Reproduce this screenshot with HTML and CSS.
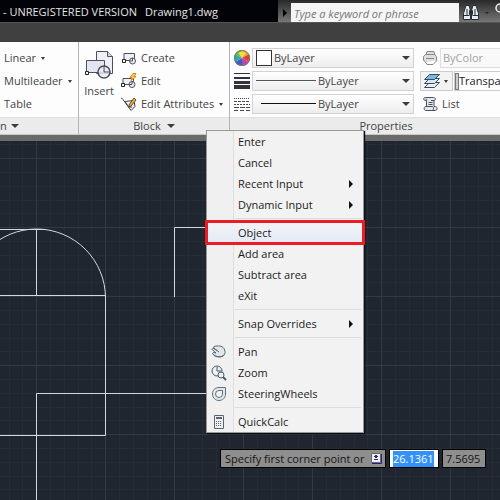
FILE: index.html
```html
<!DOCTYPE html>
<html lang="en">
<head>
<meta charset="utf-8">
<title>Drawing1.dwg</title>
<link rel="stylesheet" href="styles.css">
</head>
<body>
<div class="app">
  <header class="titlebar">
    <h1 class="title"><span>- UNREGISTERED VERSION</span><span>Drawing1.dwg</span></h1>
    <form class="search">
      <button class="search-toggle" type="button" aria-label="Collapse search"><svg width="4" height="8" viewBox="0 0 4 8"><path d="M0 0 4 4 0 8z" fill="#000"/></svg></button>
      <input class="search-input" type="text" placeholder="Type a keyword or phrase" aria-label="Search">
      <button class="search-go" type="button" aria-label="Find">
        <svg width="16" height="16" viewBox="0 0 16 16" fill="#e9edf2" stroke="#272d35"><path d="M3 .5h3l1.500 5v9h-7V8.500zM10 .5h3l2.500 8v6h-7v-9z"/><path d="M6.500 5.500h3v4h-3zM.5 10.500h6M9.500 10.500h6M4 4v6M12 4v6" fill="none"/></svg>
        <svg width="4" height="2" viewBox="0 0 4 2"><path d="M0 0h4L2 2z" fill="#222"/></svg>
      </button>
      <svg class="key" width="6" height="14" viewBox="0 0 6 14"><circle cx="6" cy="5" r="4" fill="#555" stroke="#eee" stroke-width="1.500"/></svg>
    </form>
  </header>
  <div class="tabs"></div>
  <div class="ribbon">
    <section class="panel panel-annotation">
      <div class="panel-body rows">
        <button class="tool" type="button">Linear <i class="caret small"></i></button>
        <button class="tool" type="button">Multileader <i class="caret small"></i></button>
        <button class="tool" type="button">Table</button>
      </div>
      <footer class="panel-title">n <i class="caret"></i></footer>
    </section>
    <section class="panel panel-block">
      <div class="panel-body block-tools">
        <button class="insert" type="button">
          <svg width="30" height="30" viewBox="0 0 30 30" fill="#eef0f6" stroke="#4c505b"><path d="M12.500 1.500h11l5 5v17h-16z"/><path d="M23.500 1.500v5h5" fill="#d5d8e2"/><path d="M2.500 10.500h18v12h-18z" fill="#e3e6f0"/><circle cx="20" cy="22" r="6" fill="#e8ebf4" fill-opacity=".85" stroke-width="1.500"/><path d="M20 22v-6M20 22h6" stroke-width="1"/><path d="M1.500 21.500h3v3h-3z" fill="#fff" stroke="#222"/></svg>
          <span>Insert</span>
        </button>
        <div class="rows">
          <button class="tool" type="button">
            <svg width="16" height="16" viewBox="0 0 16 16" fill="#edf0f6" stroke="#4c505b"><path d="M3 3.500h10.500v7H3z"/><circle cx="11.500" cy="11" r="3"/><path d="M8.500 11h3V8" fill="none"/><path d="M1.500 9.500h3v3h-3z" fill="#fff" stroke="#222"/></svg>
            Create</button>
          <button class="tool" type="button">
            <svg width="16" height="16" viewBox="0 0 16 16" fill="#edf0f6" stroke="#4c505b"><path d="M2 5.500h10.500v6H2z"/><circle cx="11" cy="11.500" r="3"/><path d="M8 11.500h3v-3" fill="none"/><path d="M.5 10.500h3v3h-3z" fill="#fff" stroke="#222"/><path d="m12 .5-3 4h2l-1 3 5-4h-2l2-3z" fill="#ffd54d" stroke="#dd851d"/></svg>
            Edit</button>
          <button class="tool" type="button">
            <svg width="16" height="16" viewBox="0 0 16 16" fill="#edf0f6" stroke="#3d4049"><path d="M3.500 5.500 13 4.500l1 6-4 4z"/><path d="M0 2c2 0 2 3 5 5M5 7l2 3M7 11l4 0" fill="none"/><path d="m8 9 5-7 2 2-5 6-2 1z" fill="#f2ad4e" stroke="#6b4b25"/></svg>
            Edit Attributes <i class="caret small"></i></button>
        </div>
      </div>
      <footer class="panel-title">Block <i class="caret"></i></footer>
    </section>
    <section class="panel panel-properties">
      <div class="panel-body property-columns">
        <div class="rows combos">
          <label class="property">
            <svg width="16" height="16" viewBox="0 0 16 16"><path d="M8 8V0a8 8 0 0 1 7 4z" fill="#f0a52b"/><path d="M8 8 1 4a8 8 0 0 1 7-4z" fill="#67b83e"/><path d="M8 8 15 4a8 8 0 0 1 0 8z" fill="#e43d38"/><path d="M8 8 15 12a8 8 0 0 1-7 4z" fill="#ba46b1"/><path d="M8 8v8a8 8 0 0 1-7-4z" fill="#3a5cd0"/><path d="M8 8 1 12a8 8 0 0 1 0-8z" fill="#36aaa5"/><path d="m8 8-4-5 4-2 4 2z" fill="#eddc42"/><circle cx="8" cy="8" r="7.500" fill="none" stroke="#777"/></svg>
            <span class="combo"><span class="swatch"></span><select aria-label="Object color"><option>ByLayer</option></select><i class="caret"></i></span>
          </label>
          <label class="property">
            <svg width="16" height="16" viewBox="0 0 16 16" fill="#33343b"><path d="M0 0h16v1H0zM0 4h16v2H0zM0 8h16v3H0zM0 12h16v4H0z"/></svg>
            <span class="combo"><svg class="sample" width="60" height="2" viewBox="0 0 60 2"><path d="M0 .5h60" stroke="#555"/></svg><select aria-label="Lineweight"><option>ByLayer</option></select><i class="caret"></i></span>
          </label>
          <label class="property">
            <svg width="16" height="16" viewBox="0 0 16 16" stroke="#44464d"><path d="M0 2.500h16" stroke-dasharray="1 1"/><path d="M0 5.500h16" stroke-dasharray="3 1"/><path d="M0 8.500h16" stroke-dasharray="2 1"/><path d="M0 11.500h16" stroke-dasharray="5 1"/><path d="M0 14.500h16" stroke-dasharray="4 2"/></svg>
            <span class="combo"><svg class="sample" width="60" height="2" viewBox="0 0 60 2"><path d="M5 .5h55" stroke="#111"/></svg><select aria-label="Linetype"><option>ByLayer</option></select><i class="caret"></i></span>
          </label>
        </div>
        <div class="rows extras">
          <div class="extra">
            <svg width="16" height="16" viewBox="0 0 16 16" fill="#ddd" stroke="#888"><path d="M4 5.500 5 1.500h7l1 4"/><path d="M1.500 6.500l2-2h9l2 2v4l-2 1h-9l-2-1z"/><path d="M4 8.500h8M3 11.500l2 3h6l4-4" fill="#fff"/></svg>
            <select class="plot-style" aria-label="Plot style" disabled><option>ByColor</option></select>
          </div>
          <div class="extra tight">
            <button class="layers" type="button" aria-label="Layer settings">
              <svg width="16" height="16" viewBox="0 0 16 16" stroke="#344b60"><path d="M5.500 9.500h10l-5 5H.5z" fill="#e7edf3"/><path d="M5.500 5.500h10l-5 5H.5z" fill="#dce6ee"/><path d="M5.500 1.500h10l-5 5H.5z" fill="#76b9e6"/></svg>
              <i class="caret small"></i>
            </button>
            <button class="transparency" type="button"><i class="grip"></i>Transpa</button>
          </div>
          <button class="tool list" type="button">
            <svg width="16" height="16" viewBox="0 0 16 16" fill="#e4e7ee" stroke="#4c505b"><path d="M3.500 1.500h8c2.500 0 2.500 3 .5 3v6h1.500c2 0 2 4 0 4H4c-2.500 0-2.500-4 0-4h.5v-6h-1c-2.500 0-2.500-3 0-3z"/><path d="M3.500 4.500c1.500 0 1.500-1.500 0-1.500M12 4.500H9M6.500 6.500h4M6.500 8.500h4M4 10.500h6c2 0 2 4 0 4" fill="none"/></svg>
            List</button>
        </div>
      </div>
      <footer class="panel-title">Properties</footer>
    </section>
  </div>
  <main class="workspace">
    <svg class="drawing" aria-hidden="true">
      <defs>
        <pattern id="grid" x="36" y="17" width="69" height="69" patternUnits="userSpaceOnUse">
          <path d="M14.500 0v69M28.500 0v69M42.500 0v69M55.500 0v69M0 14.500h69M0 28.500h69M0 42.500h69M0 55.500h69" stroke="#242c36"/>
          <path d="M.5 0v69M0 .5h69" stroke="#303944"/>
        </pattern>
      </defs>
      <rect width="100%" height="100%" fill="url(#grid)"/>
      <g fill="none" stroke="#d3d8dc">
        <path d="M0 88.500h46M0 154.500h105.500M36.500 88v66M105.500 154v140.500H0M36.500 400V252.500H206M174.500 156V86.500H206"/>
        <path d="M-32.500 157a69 69 0 0 1 138 0"/>
      </g>
    </svg>
  </main>

  <nav class="menu" aria-label="Context menu">
    <button type="button">Enter</button>
    <button type="button">Cancel</button>
    <button type="button">Recent Input<i class="submenu"></i></button>
    <button type="button">Dynamic Input<i class="submenu"></i></button>
    <hr>
    <button class="highlight" type="button">Object</button>
    <button type="button">Add area</button>
    <button type="button">Subtract area</button>
    <button type="button">eXit</button>
    <hr>
    <button type="button">Snap Overrides<i class="submenu"></i></button>
    <hr>
    <button type="button"><svg class="menu-icon" width="16" height="16" viewBox="0 0 16 16" fill="#e1e6ea" stroke="#566573"><path d="M3 2.500c4-1 8-1 10 2 2 4 1 7-2 8-3 1-6 0-9-2-1-1 0-2 1-2l2 .5-3.500-3c-1-1 0-2 1-1.500L6 6.500 2.500 4z"/><path d="M6 6.500 8 8M3 11.500c4 2 8 2 10-1" fill="none"/></svg>Pan</button>
    <button type="button"><svg class="menu-icon" width="16" height="16" viewBox="0 0 16 16" fill="#edf1f4" stroke="#46596b"><circle cx="6" cy="6" r="5"/><path d="M6 2v4h4" fill="none"/><circle cx="10" cy="10" r="3"/><path d="m12 12 3 3" stroke-width="2"/></svg>Zoom</button>
    <button type="button"><svg class="menu-icon" width="16" height="16" viewBox="0 0 16 16" fill="#e2e6e9" stroke="#607080"><path d="M8 1.500h6.500V8c0 4-3 6.500-6.500 6.500S1.500 12 1.500 8 4 1.500 8 1.500z"/><path d="M8 4.500h3.500V8A3.500 3.500 0 1 1 8 4.500z" fill="#f2f2f2"/></svg>SteeringWheels</button>
    <hr>
    <button type="button"><svg class="menu-icon" width="16" height="16" viewBox="0 0 16 16" fill="#edf0f2" stroke="#596570"><path d="M3.500 1.500h9v13h-9z"/><path d="M5 4h6" stroke-width="2"/><path d="M5 7.500h6M5 9.500h6M5 11.500h6" stroke-dasharray="1 1"/></svg>QuickCalc</button>
  </nav>

  <div class="prompt">
    <label class="prompt-text" for="coord-x">Specify first corner point or
      <svg width="11" height="11" viewBox="0 0 11 11"><path d="M.5.5h9v9h-9z" fill="#eee" stroke="#667"/><path d="M10.500 1v9.500H1" fill="none" stroke="#22228a"/><path d="M4 2h2v1h1v1H6v1H4V4H3V3h1zM3 6h4v1H3z" fill="#334"/></svg>
    </label>
    <span class="coord active"><input id="coord-x" type="text" value="26.1361"></span>
    <span class="coord"><input type="text" value="7.5695" aria-label="Y coordinate"></span>
  </div>
</div>
</body>
</html>
```
FILE: styles.css
```css
* { box-sizing: border-box; }

body {
  margin: 0;
  font: 11px/16px "Open Sans", "Noto Sans", sans-serif;
  color: #444;
}

button, input, select {
  margin: 0;
  padding: 0;
  border: 0;
  background: none;
  font: inherit;
  color: inherit;
}

svg { flex: none; display: block; }

.app {
  position: relative;
  display: flex;
  flex-direction: column;
  min-height: 100vh;
  overflow: hidden;
  background: #1f2630;
}

/* Title bar */
.titlebar {
  display: flex;
  justify-content: space-between;
  height: 23px;
  background: #020308;
  border-bottom: 1px solid #555;
}

.title {
  display: flex;
  gap: 8px;
  margin: 0;
  padding: 4px 3px;
  font-size: 11px;
  font-weight: 400;
  color: #e4e4e4;
  white-space: nowrap;
}

.search {
  display: flex;
  align-items: stretch;
  flex: none;
  width: 222px;
  padding-top: 3px;
  background: linear-gradient(#292929, #777);
}

.search-toggle {
  display: flex;
  align-items: center;
  justify-content: center;
  width: 13px;
}

.search-input {
  flex: 1;
  min-width: 0;
  padding: 2px 3px 0;
  background: #f5f5f5;
  font-style: italic;
}

.search-input::placeholder { color: #777; opacity: 1; }

.search-go {
  display: flex;
  align-items: center;
  gap: 6px;
  padding: 0 3px 0 4px;
}

.key { margin-left: 2px; }

.tabs { height: 19px; background: #404040; }

/* Ribbon */
.ribbon {
  display: flex;
  background: #fdfdfd;
  border-bottom: 1px solid #c8c8c8;
}

.panel {
  display: flex;
  flex-direction: column;
  flex: none;
  border-right: 1px solid #b4b4b4;
}

.panel-annotation { width: 79px; }
.panel-block { width: 151px; }
.panel-properties { flex: 1; min-width: 0; border-right: 0; overflow: hidden; }

.panel-body { padding: 6px 4px 3px; }

.rows {
  display: grid;
  grid-auto-rows: 20px;
  row-gap: 3px;
}

.tool {
  display: flex;
  align-items: center;
  gap: 4px;
  white-space: nowrap;
}

.caret {
  flex: none;
  border: 4px solid transparent;
  border-top-color: #3c3c3c;
  border-bottom: 0;
}

.caret.small { border-width: 3px 2px 0; margin-left: 1px; }

.panel-title {
  display: flex;
  align-items: center;
  justify-content: center;
  gap: 6px;
  height: 17px;
  background: #ebebeb;
  border-top: 1px solid #e0e0e0;
}

.panel-annotation .panel-title { justify-content: flex-start; gap: 4px; }
.panel-properties .panel-title { padding-left: 42px; }

.block-tools { display: flex; gap: 6px; }

.insert {
  display: flex;
  flex-direction: column;
  align-items: center;
  gap: 3px;
  width: 32px;
  padding-top: 2px;
  align-self: flex-start;
}

.property-columns { display: flex; gap: 6px; }
.combos { width: 180px; flex: none; }

.property {
  display: flex;
  align-items: center;
  gap: 2px;
}

.combo {
  display: flex;
  align-items: center;
  gap: 2px;
  flex: 1;
  height: 20px;
  padding: 0 3px;
  border: 1px solid #d2d2d2;
  background: linear-gradient(#fff, #ededed);
}

.combo select { flex: 1; min-width: 0; }
select { appearance: none; }
select:disabled { opacity: 1; }

.swatch {
  width: 16px;
  height: 16px;
  border: 1px solid #333;
  background: #fff;
}

.extras { flex: 1; min-width: 0; }

.extra {
  display: flex;
  align-items: center;
  gap: 5px;
  min-width: 0;
}

.extra.tight { gap: 1px; }

.extra > svg, .list > svg { margin-left: 2px; }
.extra > svg { margin-right: -3px; }

.plot-style {
  flex: 1;
  height: 20px;
  margin-right: -4px;
  padding-left: 2px;
  border: 1px solid #ddd;
  border-right: 0;
  background: #f9f9f9;
  color: #a2a2a2;
}

.layers {
  display: flex;
  align-items: center;
  flex: none;
  gap: 3px;
  width: 33px;
  height: 20px;
  padding: 0 3px;
  border: 1px solid #ccc;
  background: #f3f3f3;
}

.transparency {
  display: flex;
  align-items: center;
  flex: 1;
  min-width: 0;
  height: 20px;
  margin-right: -4px;
  border: 1px solid #ccc;
  border-right: 0;
  background: #fff;
  color: #222;
}

.grip {
  flex: none;
  width: 4px;
  height: 17px;
  border: 1px solid #777;
  background: #ccc;
}

/* Drawing area */
.workspace {
  display: flex;
  flex: 1;
  border-top: 6px solid #6b6b6b;
}

.drawing { flex: 1; width: 100%; }

/* Context menu */
.menu {
  position: absolute;
  left: 206px;
  top: 130px;
  width: 158px;
  border: 1px solid #999;
  background: linear-gradient(90deg, #f0f0f0 26px, #dfdfdf 26px, #dfdfdf 27px, #f2f2f2 27px);
  box-shadow: 1px 1px 1px #0a0d12;
  color: #1c1c1c;
}

.menu button {
  position: relative;
  display: flex;
  align-items: center;
  width: 100%;
  height: 21px;
  padding: 0 10px 0 31px;
  text-align: left;
}

.menu hr {
  height: 1px;
  margin: 3px 2px 3px 28px;
  border: 0;
  background: #dcdcdc;
}

.menu-icon { position: absolute; left: 4px; }

.submenu {
  margin-left: auto;
  border: 4px solid transparent;
  border-left-color: #111;
  border-right: 0;
}

.menu .highlight {
  background: linear-gradient(#f3f4f7, #e3e9f5);
  outline: 3px solid #ed1c24;
  outline-offset: -1px;
}

/* Dynamic input prompt */
.prompt {
  position: absolute;
  left: 220px;
  top: 449px;
  display: flex;
  gap: 3px;
  color: #151515;
}

.prompt-text, .coord {
  display: flex;
  align-items: center;
  height: 19px;
  border: 1px solid #000;
  background: #8e8e8e;
}

.prompt-text {
  justify-content: space-between;
  width: 166px;
  padding: 0 3px 0 4px;
  white-space: nowrap;
}

.coord { width: 44px; padding: 0 3px; }
.coord.active { width: 50px; background: #fff; }
.coord input { width: 36px; }
.coord.active input { width: 41px; background: #3392f8; color: #fff; }
```
